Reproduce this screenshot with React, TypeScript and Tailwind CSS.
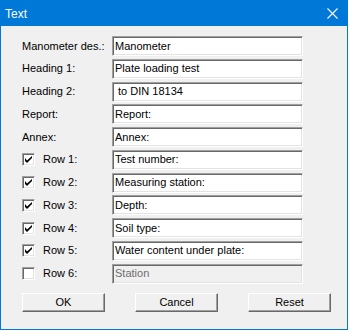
import { useState } from 'react';

type Row = {
  label: string;
  value: string;
  check?: boolean;
  disabled?: boolean;
};

const ROWS: Row[] = [
  { label: 'Manometer des.:', value: 'Manometer' },
  { label: 'Heading 1:', value: 'Plate loading test' },
  { label: 'Heading 2:', value: ' to DIN 18134' },
  { label: 'Report:', value: 'Report:' },
  { label: 'Annex:', value: 'Annex:' },
  { label: 'Row 1:', value: 'Test number:', check: true },
  { label: 'Row 2:', value: 'Measuring station:', check: true },
  { label: 'Row 3:', value: 'Depth:', check: true },
  { label: 'Row 4:', value: 'Soil type:', check: true },
  { label: 'Row 5:', value: 'Water content under plate:', check: true },
  { label: 'Row 6:', value: 'Station', check: false, disabled: true },
];

function CheckBox({ checked, onToggle }: { checked: boolean; onToggle: () => void }) {
  return (
    <button
      type="button"
      onClick={onToggle}
      className="w-[13px] h-[13px] shrink-0 bg-white border border-t-[#a0a0a0] border-l-[#a0a0a0] border-r-white border-b-white shadow-[inset_1px_1px_0_#696969,inset_-1px_-1px_0_#e3e3e3] flex items-center justify-center"
    >
      {checked && (
        <svg width="7" height="7" viewBox="0 0 7 7" className="block">
          <path d="M0 2v3l2 2 5-5V0L2 4.5z" fill="#000" />
        </svg>
      )}
    </button>
  );
}

function Field({ value, disabled }: { value: string; disabled?: boolean }) {
  return (
    <div
      className={`w-[191px] h-[20px] border border-t-[#a0a0a0] border-l-[#a0a0a0] border-r-white border-b-white shadow-[inset_1px_1px_0_#696969,inset_-1px_-1px_0_#e3e3e3] flex items-center pl-[2px] whitespace-pre ${
        disabled ? 'bg-[#f0f0f0] text-[#6d6d6d]' : 'bg-white text-black'
      }`}
    >
      {value}
    </div>
  );
}

function Btn({ children }: { children: string }) {
  return (
    <button
      type="button"
      className="w-[83px] h-[19px] bg-[#f0f0f0] border border-t-white border-l-white border-r-[#696969] border-b-[#696969] shadow-[inset_-1px_-1px_0_#a0a0a0] text-black flex items-center justify-center"
    >
      {children}
    </button>
  );
}

export default function App() {
  const [checks, setChecks] = useState(ROWS.map((r) => !!r.check));

  return (
    <div className="w-[349px] h-[331px] bg-white" style={{ fontFamily: '"Liberation Sans", Arial, sans-serif' }}>
      <div className="w-[348px] h-[330px] border border-[#0078d7] bg-[#f0f0f0] flex flex-col text-[11px] leading-none">
        {/* Title bar */}
        <div className="h-[25px] bg-[#0078d7] flex items-center justify-between pl-[4px] pr-[9px] text-white text-[12px]">
          <span>Text</span>
          <svg width="11" height="11" viewBox="0 0 11 11">
            <path d="M0.5 0.5l10 10M10.5 0.5l-10 10" stroke="#fff" strokeWidth="1.1" />
          </svg>
        </div>

        {/* Fields */}
        <div className="flex flex-col gap-[2.75px] pt-[10px] pl-[21px]">
          {ROWS.map((row, i) => (
            <div key={row.label} className="flex items-center">
              <div className="w-[90px] flex items-center gap-[8px]">
                {row.check !== undefined && (
                  <CheckBox
                    checked={checks[i]}
                    onToggle={() => setChecks((c) => c.map((v, j) => (j === i ? !v : v)))}
                  />
                )}
                <span className="text-black">{row.label}</span>
              </div>
              <Field value={row.value} disabled={row.disabled} />
            </div>
          ))}
        </div>

        {/* Buttons */}
        <div className="flex gap-[30px] pl-[21px] mt-[9px]">
          <Btn>OK</Btn>
          <Btn>Cancel</Btn>
          <Btn>Reset</Btn>
        </div>
      </div>
    </div>
  );
}
